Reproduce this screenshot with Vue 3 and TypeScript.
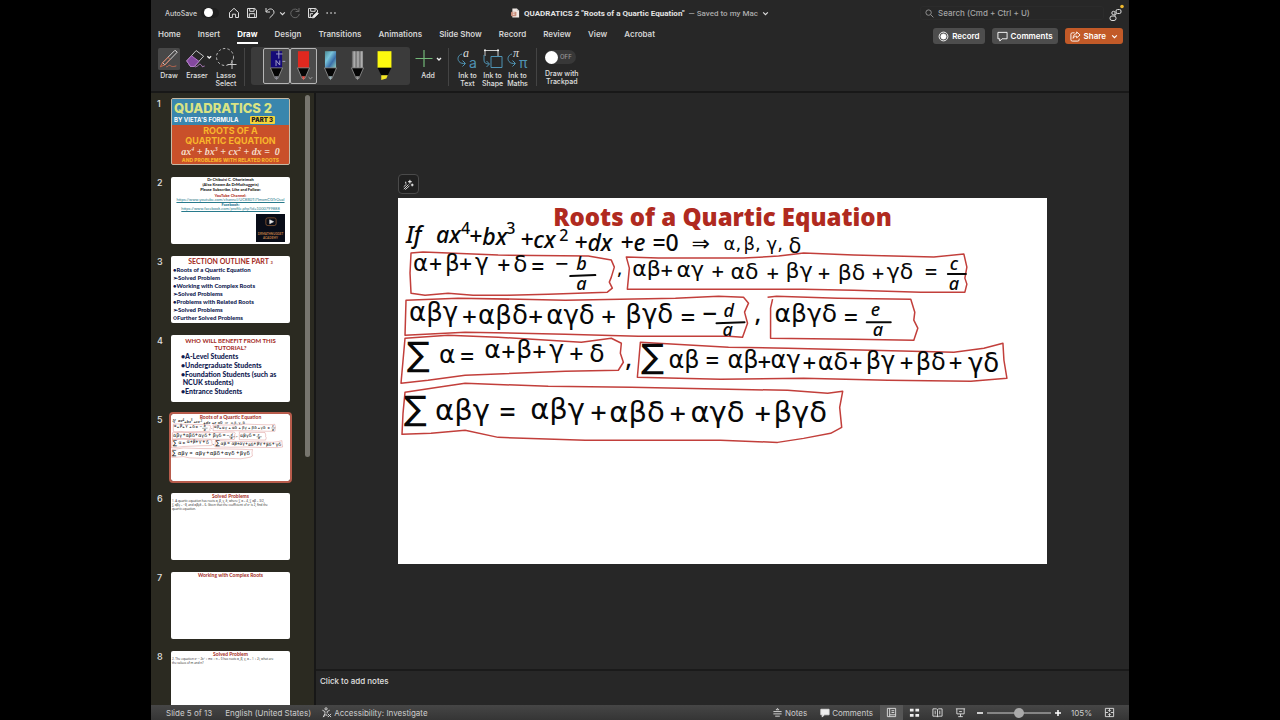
<script setup lang="ts">
import { ref } from 'vue'

interface Mark { t: string; x: number; y: number; s: number; kind: string }

const kindOf = (t: string): string =>
  /[α-ω]/.test(t) ? 'greek' : /[a-zA-Z]/.test(t) ? 'latin' : 'sign'

const m = (s: number, ...items: [string, number, number][]): Mark[] =>
  items.map(([t, x, y]) => ({ t, x, y, s, kind: kindOf(t) }))

const tabs = ['Home', 'Insert', 'Draw', 'Design', 'Transitions', 'Animations', 'Slide Show', 'Record', 'Review', 'View', 'Acrobat']
const activeTab = ref('Draw')
const autosave = ref(false)
const trackpad = ref(false)
const zoom = ref(50)
const search = ref('')
const pens = [
  { name: 'Blue pen', fill: '#150a78', tip: '#8c8c96', on: true },
  { name: 'Red pen', fill: '#e0281f', tip: '#e85a50', on: true },
  { name: 'Galaxy pen', fill: 'url(#galaxy)', tip: '#9fb7bd', on: false },
  { name: 'Pencil', fill: 'url(#pencil)', tip: '#9a9a9a', on: false },
]

const marks: Mark[] = [
  ...m(23, ['If', 8, 45], ['ax', 38, 45], ['+bx', 71, 47], ['+cx', 122, 50], ['+dx', 176, 53], ['+e', 222, 53]),
  ...m(23, ['=0', 254, 53]),
  ...m(22, ['⇒', 293, 53]),
  ...m(18, ['α,', 325, 52], ['β,', 345, 52], ['γ,', 368, 52]),
  ...m(21, ['δ', 390, 55]),
  ...m(16, ['4', 63, 36], ['3', 108, 36], ['2', 161, 43]),
  ...m(23, ['α', 15, 73], ['+', 31, 75], ['β', 47, 73], ['+', 61, 75], ['γ', 77, 72], ['+', 99, 76], ['δ', 115, 74], ['=', 133, 77], ['−', 157, 74]),
  ...m(18, ['b', 178, 72], ['a', 178, 92], [',', 219, 77]),
  ...m(22, ['αβ', 234, 78], ['+', 262, 80], ['αγ', 278, 79], ['+', 313, 81], ['αδ', 332, 81], ['+', 368, 83], ['βγ', 387, 80], ['+', 419, 83], ['βδ', 439, 82], ['+', 473, 83], ['γδ', 488, 81], ['=', 526, 82]),
  ...m(18, ['c', 551, 72], ['a', 550, 92]),
  ...m(26, ['αβγ', 11, 123], ['+', 64, 128], ['αβδ', 80, 126], ['+', 130, 128], ['αγδ', 148, 126], ['+', 203, 128], ['βγδ', 227, 125], ['=', 282, 128], ['−', 304, 125]),
  ...m(18, ['d', 325, 119], ['a', 324, 138], ['e', 472, 118], ['a', 474, 138]),
  ...m(25, [',', 356, 124], ['αβγδ', 376, 124], ['=', 445, 128]),
  ...m(34, ['∑', 9, 168], ['∑', 243, 170], ['∑', 6, 222]),
  ...m(25, ['α', 41, 165], ['=', 62, 167], ['α', 86, 160], ['+', 103, 163], ['β', 118, 160], ['+', 134, 163], ['γ', 151, 160], ['+', 171, 165], ['δ', 191, 164], [',', 227, 169]),
  ...m(24, ['αβ', 270, 170], ['=', 307, 171], ['αβ', 329, 170], ['+', 359, 173], ['αγ', 372, 170], ['+', 404, 174], ['αδ', 419, 172], ['+', 450, 174], ['βγ', 467, 171], ['+', 501, 174], ['βδ', 517, 172], ['+', 550, 174]),
  ...m(26, ['γδ', 569, 174]),
  ...m(29, ['αβγ', 37, 222], ['=', 101, 224], ['αβγ', 132, 221], ['+', 192, 225], ['αβδ', 211, 224], ['+', 271, 226], ['αγδ', 292, 224], ['+', 356, 226], ['βγδ', 375, 224]),
]

const fractionBars = 'M172 78 197 77 M549 76h18 M318 125 346 124 M468 124h24'

const boxes = [
  'M13 55 25 54 100 57 190 58 213 62 216 69 213 79 211 84 214 90 209 94 150 96 110 97 75 97 50 95 27 97 13 95 12 75Z',
  'M228 59 260 60 322 60 345 60 380 58 405 55 455 57 535 59 565 56 568 69 566 80 568 86 566 94 522 94 455 92 405 91 322 91 229 91 231 70Z',
  'M8 102 60 100 167 102 277 100 320 98 345 99 350 105 346 114 349 125 344 139 330 138 240 138 167 136 67 134 7 137Z',
  'M369 99 378 98 439 100 512 101 516 114 515 122 519 130 515 142 455 141 372 140 372 110 374 101',
  'M7 140 50 137 100 139 183 144 213 140 223 145 222 155 225 164 220 172 167 173 67 177 30 182 3 185Z',
  'M242 144 330 149 389 150 472 152 555 154 585 150 604 145 605 162 608 180 572 183 489 182 405 180 322 181 239 179Z',
  'M7 194 40 189 67 185 150 188 233 189 330 191 389 192 429 195 444 193 441 209 443 229 432 235 405 240 379 244 322 242 187 242 100 239 67 232 33 235 4 236 5 215Z',
]
</script>

<template>
  <div class="screen">
    <div class="app">
      <header class="titlebar">
        <div class="quick">
          <label class="autosave">AutoSave <input v-model="autosave" type="checkbox" /></label>
          <button aria-label="Home"><svg viewBox="0 0 12 12"><path d="M1.5 5.5 6 1.3l4.5 4.2v5H7.6V7.2H4.4v3.3H1.5z" /></svg></button>
          <button aria-label="Save"><svg viewBox="0 0 12 12"><path d="M1.5 1.5h7.3l1.7 1.7v7.3h-9zM3.7 1.7v2.6h4.4V1.7M3.3 10.3V6.7h5.4v3.6" /></svg></button>
          <button aria-label="Undo"><svg viewBox="0 0 12 12"><path d="M2 1v4h4M2.2 4.8C4 2 6.500 1.300 8.500 2.500 10.600 4 10.300 6.300 9 7.600L5.500 11" /></svg></button>
          <button class="tiny" aria-label="Undo options"><svg viewBox="0 0 6 6"><path d="m1 2 2 2 2-2" /></svg></button>
          <button class="dim" aria-label="Redo"><svg viewBox="0 0 12 12"><path d="M10 1v3.500H6.500M9.800 4.300A4.300 4.300 0 1 0 10.300 7" /></svg></button>
          <button aria-label="Save and edit"><svg viewBox="0 0 12 12"><path d="M5 10.500H1.500v-9h7.300l1.700 1.700V5M3.700 1.700v2.600h4.400V1.700M3.300 10.300V6.700H6" /><path d="m5.500 11 .6-2L10 5.200l1.400 1.400-3.900 3.800z" fill="#eee" /></svg></button>
          <button aria-label="More"><svg viewBox="0 0 12 12"><path d="M1.500 6h1.300M5.400 6h1.300M9.300 6h1.300" stroke-width="1.600" /></svg></button>
        </div>
        <div class="doc">
          <svg viewBox="0 0 10 11"><path d="M1.500.5h5L9 3v7.500H1.500z" fill="#f1e9e4" /><path d="M6.500.5V3H9" fill="#bbb" /><rect x="0" y="4" width="6" height="5" rx="1" fill="#c98f7c" /><path d="M2 5.300h2M2 7h2" stroke="#fff" stroke-width=".8" /></svg>
          <b>QUADRATICS 2 "Roots of a Quartic Equation"</b>
          <span>— Saved to my Mac</span>
          <svg class="chev" viewBox="0 0 6 6"><path d="m1 2 2 2 2-2" /></svg>
        </div>
        <div class="find">
          <label class="search">
            <svg viewBox="0 0 10 10"><circle cx="4" cy="4" r="3" /><path d="m6.300 6.300 3 3" /></svg>
            <input v-model="search" type="text" aria-label="Search" placeholder="Search (Cmd + Ctrl + U)" />
          </label>
          <button class="people" aria-label="Collaborators">
            <svg viewBox="0 0 16 18"><circle cx="5.500" cy="9" r="1.700" /><rect x="2" y="12" width="6" height="4.500" rx="2" /><rect x="8" y="5.500" width="5" height="4" rx="1.500" /><path d="m6.500 12 2-2.500" /><circle cx="14" cy="2.500" r="1.800" fill="#f0b92e" stroke="none" /></svg>
          </button>
        </div>
      </header>

      <nav class="tabs">
        <button v-for="t in tabs" :key="t" class="tab" :class="{ active: t === activeTab }" @click="activeTab = t">{{ t }}</button>
        <div class="actions">
          <button class="pill"><svg viewBox="0 0 12 12"><circle cx="6" cy="6" r="4.800" /><circle cx="6" cy="6" r="2.800" fill="#fff" /></svg>Record</button>
          <button class="pill"><svg viewBox="0 0 12 12"><path d="M1 1.500h10v7H5.500L3 11V8.500H1z" /></svg>Comments</button>
          <button class="pill share"><svg viewBox="0 0 12 12"><path d="M5 2H2.500A1.500 1.500 0 0 0 1 3.500v6A1.500 1.500 0 0 0 2.500 11h6A1.500 1.500 0 0 0 10 9.500V8.300M7.300 1l3.700 3.300-3.700 3.200V5.600C5.300 5.600 4.300 6.400 3.400 8c.1-3 1.400-4.900 3.900-5.100z" /></svg>Share<svg class="chev" viewBox="0 0 6 6"><path d="m1 2 2 2 2-2" /></svg></button>
        </div>
      </nav>

      <section class="ribbon">
        <button class="tool draw">
          <svg viewBox="0 0 24 24"><rect width="24" height="24" rx="2" fill="#484848" stroke="none" /><path d="M5 16 18.500 2.500l2.500 2L7.500 18.500z" stroke="#ddd" /><path d="M5 16 2.500 20.500l5-2 5.500-6L11 10z" stroke="#d36b4d" /><path d="M9 20.500c3 0 2-2.500 4-1.500s2 2 7 .5" stroke="#c66a50" /></svg>
          Draw
        </button>
        <button class="tool eraser">
          <svg viewBox="0 0 32 24"><path d="m4 14 10-11 8 6-10 11H8z" stroke="#ccc" /><path d="m4 14 5-5.500 8 6L12 20H8z" fill="#84489f" stroke="#b377ca" /><path d="M13 20.500c4-1 4-4 6-2.500s0 3 4 1.500" stroke="#c48ad5" /><path d="m26 9 2 2 2-2" stroke="#eee" stroke-width="1.400" /></svg>
          Eraser
        </button>
        <button class="tool lasso">
          <svg viewBox="0 0 24 24"><circle cx="11" cy="10" r="8.500" stroke="#bbb" stroke-dasharray="2.500 2.200" /><path d="M18 13v9M13.500 17.500h9" stroke="#ccc" /></svg>
          Lasso<br />Select
        </button>
        <span class="rule"></span>
        <div class="pens">
          <button v-for="p in pens" :key="p.name" class="pen" :class="{ on: p.on }" :aria-label="p.name">
            <svg viewBox="0 0 27 34">
              <defs>
                <linearGradient id="galaxy" x2="1" y2="1"><stop offset="0" stop-color="#4c8a93" /><stop offset=".35" stop-color="#79c4da" /><stop offset=".65" stop-color="#3a6ea8" /><stop offset="1" stop-color="#8fd0be" /></linearGradient>
                <linearGradient id="pencil" x2="4" spreadMethod="repeat" gradientUnits="userSpaceOnUse"><stop offset="0" stop-color="#6e6e6e" /><stop offset=".5" stop-color="#b5b5b5" /><stop offset="1" stop-color="#6e6e6e" /></linearGradient>
              </defs>
              <path d="M7.500 1h12v18h-12z" :fill="p.fill" />
              <path d="M7 19h13l-5 11.500h-3z" fill="#050505" stroke="#c9c9c9" stroke-width=".6" />
              <path d="m11.500 28 2 4.500 2-4.500z" :fill="p.tip" />
              <path v-if="p.name === 'Red pen'" d="m19 29 2 2 2-2" stroke="#aaa" fill="none" />
              <path v-if="p.name === 'Blue pen'" d="M16 0v9M13 4h7M13 17v-6l4 5v-5M20 12h3" stroke="#a6a4c9" fill="none" />
            </svg>
          </button>
          <button class="pen" aria-label="Yellow highlighter">
            <svg viewBox="0 0 27 34"><path d="M6 1h15v18H6z" fill="#fcf90f" /><path d="M6 19h15l-4 8h-7z" fill="#050505" /><path d="M10 27h7l-1.500 3.500L10 32z" fill="#f4e622" /></svg>
          </button>
        </div>
        <button class="tool add">
          <svg viewBox="0 0 28 24"><path d="M10 3v17M1.500 11.500h17" stroke="#72b878" stroke-width="1.200" /><path d="m23 11 2 2 2-2" stroke="#eee" stroke-width="1.400" /></svg>
          Add
        </button>
        <span class="rule"></span>
        <div class="inks">
          <button class="tool ink">
            <svg viewBox="0 0 24 24"><text x="7" y="10" class="ia">a</text><text x="13" y="21" class="ib">a</text><path d="M6 7C2 8 1 12 3 14.500c1.500 2 4 2 6 2M6.500 13.500l3 3-3 3" stroke="#4f93b4" /></svg>
            Ink to<br />Text
          </button>
          <button class="tool ink">
            <svg viewBox="0 0 24 24"><path d="M4 3.500h13M17 5v4M4 5v4" stroke="#ccc" /><path d="M3 2.500h2v2H3zM16 2.500h2v2h-2z" fill="#eee" stroke="none" /><path d="M10 9.500h11v11H10zM3 8v5c0 3 2 4 5 4M5.500 14l3 3-3 3" stroke="#4f93b4" /></svg>
            Ink to<br />Shape
          </button>
          <button class="tool ink">
            <svg viewBox="0 0 24 24"><text x="7" y="10" class="ia">π</text><text x="13" y="21" class="ib">π</text><path d="M6 7C2 8 1 12 3 14.500c1.500 2 4 2 6 2M6.500 13.500l3 3-3 3" stroke="#4f93b4" /></svg>
            Ink to<br />Maths
          </button>
        </div>
        <span class="rule"></span>
        <label class="trackpad">
          <span class="switch"><input v-model="trackpad" type="checkbox" /><i>OFF</i></span>
          Draw with<br />Trackpad
        </label>
      </section>

      <main class="body">
        <aside class="rail">
          <ol class="thumbs">
            <li><span>1</span>
              <div class="thumb cover">
                <div class="top"><b>QUADRATICS 2</b><div><em>BY VIETA'S FORMULA</em><mark>PART 3</mark></div></div>
                <div class="mid"><b>ROOTS OF A<br />QUARTIC EQUATION</b><i>ax<sup>4</sup> + bx<sup>3</sup> + cx<sup>2</sup> + dx = &nbsp;0</i><small>AND PROBLEMS WITH RELATED ROOTS</small></div>
              </div>
            </li>
            <li><span>2</span>
              <div class="thumb author">
                <p>Dr Chibuisi C. Okorieimoh</p><p>(Also Known As DrMathuggets)</p><p>Please Subscribe, Like and Follow:</p>
                <p class="red">YouTube Channel:</p><a href="#">https://www.youtube.com/channel/UC8B0Ti7ImxmCGTrOual</a>
                <p class="blue">Facebook:</p><a href="#">https://www.facebook.com/profile.php?id=1000799888</a>
                <div class="logo"><svg viewBox="0 0 28 28"><rect x="6" y="6" width="16" height="12" rx="3" fill="none" stroke="#a86b3a" /><path d="m12 9 6 3-6 3z" fill="#eee" /></svg><span>DRMATHNUGGET</span><span>ACADEMY</span></div>
              </div>
            </li>
            <li><span>3</span>
              <div class="thumb outline">
                <h3>SECTION OUTLINE PART <small>3</small></h3>
                <p>•Roots of a Quartic Equation</p><p>➢Solved Problem</p><p>•Working with Complex Roots</p><p>➢Solved Problems</p><p>•Problems with Related Roots</p><p>➢Solved Problems</p><p>○Further Solved Problems</p>
              </div>
            </li>
            <li><span>4</span>
              <div class="thumb benefit">
                <h3>WHO WILL BENEFIT FROM THIS<br />TUTORIAL?</h3>
                <p>•A-Level Students</p><p>•Undergraduate Students</p><p>•Foundation Students (such as<br />&nbsp;NCUK students)</p><p>•Entrance Students</p>
              </div>
            </li>
            <li><span>5</span>
              <div class="thumb current"><h4>Roots of a Quartic Equation</h4><svg class="mini" viewBox="0 0 648 365"><use href="#ink" /></svg></div>
            </li>
            <li><span>6</span>
              <div class="thumb problem"><h4>Solved Problems</h4><p>1. A quartic equation has roots α, β, γ, δ, where ∑ α = 4, ∑ αβ = 3/2,<br />∑ αβγ = −8, and αβγδ = 6. Given that the coefficient of x⁴ is 2, find the<br />quartic equation.</p></div>
            </li>
            <li><span>7</span><div class="thumb problem"><h4>Working with Complex Roots</h4></div></li>
            <li><span>8</span>
              <div class="thumb problem"><h4>Solved Problem</h4><p>2. The equation x⁴ − 2x³ + mx + n = 0 has roots α, β, γ, α = 1 + 2i, what are<br />the values of m and n?</p></div>
            </li>
          </ol>
          <div class="scroll"></div>
        </aside>

        <div class="work">
          <div class="stage">
            <button class="designer" aria-label="Designer">
              <svg viewBox="0 0 14 14"><path d="m2 12 5-5M3.500 12.500l4.500-4M1.800 9.500 5 6.500" stroke="#ddd" /><path d="M8.500 2v4M6.500 4h4M11 6v3M9.500 7.500h3M4 4v2" stroke="#fff" /></svg>
            </button>
            <article class="slide">
              <h1>Roots of a Quartic Equation</h1>
              <svg class="ink-layer" viewBox="0 0 648 365">
                <g id="ink">
                  <path v-for="(b, i) in boxes" :key="'b' + i" :d="b" class="box" />
                  <text v-for="(k, i) in marks" :key="i" :x="k.x" :y="k.y" :font-size="k.s" class="hand" :class="k.kind">{{ k.t }}</text>
                  <path :d="fractionBars" class="bar" />
                </g>
              </svg>
            </article>
          </div>
          <div class="notes">Click to add notes</div>
        </div>
      </main>

      <footer class="status">
        <span>Slide 5 of 13</span>
        <span>English (United States)</span>
        <button class="acc"><svg viewBox="0 0 12 12"><circle cx="5.500" cy="2" r="1.200" /><path d="M1.500 3.500 4.300 5v2L2.500 11 5.500 8l1.500 2M9.500 3.500 6.700 5v2M7.500 7.500l3.500 3.500M11 7.500 7.500 11" /></svg>Accessibility: Investigate</button>
        <div class="right">
          <button class="word"><svg viewBox="0 0 12 12"><path d="M1.500 5h9M1.500 7.500h9M3.500 10h5M4.500 3 6 1.500 7.500 3z" /></svg>Notes</button>
          <button class="word"><svg viewBox="0 0 12 12"><path d="M2 2.500h9v6H6L3.500 11V8.500H2z" fill="#eee" /></svg>Comments</button>
          <div class="views">
            <button class="on" aria-label="Normal"><svg viewBox="0 0 12 12"><path d="M1.500 1.500h9v9h-9zM4 1.500v9M6 4h3M6 6h3M4 8.500h6.500" /></svg></button>
            <button aria-label="Slide sorter"><svg viewBox="0 0 12 12"><path d="M1 2h4v3H1zM7 2h4v3H7zM1 7.500h4v3H1zM7 7.500h4v3H7z" fill="#eee" stroke="none" /></svg></button>
            <button aria-label="Reading view"><svg viewBox="0 0 12 12"><path d="M1 2h4l1 1 1-1h4v8H7l-1 1-1-1H1zM6 3v8M3.500 4v4M8.500 4v4" /></svg></button>
            <button aria-label="Slide show"><svg viewBox="0 0 12 12"><path d="M1 2h10M2 2v5.500h8V2M6 7.500v3M3.500 10.500h5M4.500 5h3" /></svg></button>
          </div>
          <button class="step" aria-label="Zoom out"><svg viewBox="0 0 8 8"><path d="M1 4h6" stroke-width="1.500" /></svg></button>
          <input v-model.number="zoom" class="zoom" type="range" min="0" max="100" aria-label="Zoom" />
          <button class="step" aria-label="Zoom in"><svg viewBox="0 0 8 8"><path d="M1 4h6M4 1v6" stroke-width="1.500" /></svg></button>
          <span class="pct">105%</span>
          <button class="fit" aria-label="Fit slide"><svg viewBox="0 0 12 12"><path d="M1.500 1.500h9v9h-9zM6 1.500v3M6 7.500v3M1.500 6h3M7.500 6h3M4.500 3.500 6 5l1.500-1.500M4.500 8.500 6 7l1.500 1.500" /></svg></button>
        </div>
      </footer>
    </div>
  </div>
</template>

<style>
html, body { background: #000; }
</style>

<style scoped>
* { box-sizing: border-box; }
.screen { display: grid; grid-template-columns: 151fr 978fr 151fr; height: 100vh; background: #000; font-family: Inter, "Liberation Sans", sans-serif; color: #e0e0e0; overflow: hidden; }
.app { grid-column: 2; display: flex; flex-direction: column; min-width: 0; min-height: 0; background: #272727; }
button { font: inherit; color: inherit; background: none; border: 0; padding: 0; }
svg { display: block; fill: none; stroke: #ddd; stroke-width: 1; flex: none; }
.chev { width: 7px; height: 7px; }

.titlebar { display: grid; grid-template-columns: 1fr auto 1fr; align-items: center; height: 26px; font-size: 8px; }
.quick { display: flex; align-items: center; padding-left: 14px; gap: 6px; }
.quick svg { width: 12px; height: 12px; }
.quick .tiny { margin: 0 -3px; }
.quick .tiny svg { width: 7px; height: 7px; }
.quick .dim { opacity: .35; }
.autosave { display: flex; align-items: center; gap: 4px; margin-right: 3px; color: #ccc; font-size: 7px; font-weight: 500; }
.autosave input { appearance: none; width: 18px; height: 10px; margin: 0; border-radius: 5px; background: #1f1f1f; }
.autosave input::before { content: ""; display: block; width: 9px; height: 9px; border-radius: 50%; background: #fff; margin-left: 3px; }
.doc { display: flex; align-items: center; gap: 4px; white-space: nowrap; color: #aaa; font-family: Roboto, Inter, sans-serif; }
.doc b { font-weight: 700; color: #e4e4e4; }
.doc span { font-weight: 500; }
.doc svg:first-child { width: 9px; height: 10px; stroke: none; }
.find { display: flex; justify-content: flex-end; align-items: center; gap: 4px; padding-right: 5px; }
.search { display: flex; align-items: center; gap: 4px; width: 184px; height: 14px; padding-left: 4px; border: 1px solid #2b2b2b; border-radius: 3px; }
.search svg { width: 9px; height: 9px; stroke: #999; }
.search input { flex: 1; min-width: 0; border: 0; padding: 0; background: none; outline: 0; font: 500 8px Inter, sans-serif; color: #ddd; }
.search input::placeholder { color: #a5a5a5; opacity: 1; }
.people svg { width: 16px; height: 18px; }

.tabs { display: flex; align-items: center; height: 18px; padding-left: 7px; font-size: 8px; font-weight: 600; gap: 17px; color: #d4d4d4; }
.tab { height: 18px; white-space: nowrap; border-bottom: 2px solid transparent; }
.tab.active { font-weight: 700; color: #fff; border-color: #fff; }
.actions { display: flex; gap: 7px; margin-left: auto; padding: 2px 6px 0 0; }
.pill { display: flex; align-items: center; justify-content: center; gap: 3px; height: 16px; padding: 0 5px; border-radius: 3px; background: #4d4d4d; color: #fff; font-size: 8px; font-weight: 600; }
.pill svg { width: 11px; height: 11px; stroke: #fff; }
.pill.share { background: #c25a28; }
.pill .chev { width: 7px; height: 7px; margin-left: 2px; }

.ribbon { display: flex; align-items: flex-start; gap: 3px; height: 49px; padding: 3px 0 0 7px; border-bottom: 2px solid #181818; font-size: 7px; font-weight: 500; line-height: 8px; }
.tool { display: block; text-align: center; white-space: nowrap; }
.tool svg { height: 24px; margin: 0 auto 1px; overflow: visible; }
.draw { width: 22px; }
.draw svg { width: 22px; }
.eraser { width: 28px; }
.eraser svg { width: 30px; }
.lasso { width: 24px; }
.lasso svg { width: 24px; }
.add { width: 28px; margin-left: 1px; }
.add svg { width: 28px; }
.inks { display: flex; }
.ink { width: 25px; }
.ink svg { width: 24px; }
.ia { font: italic 12px "Liberation Serif", serif; fill: #ddd; stroke: none; }
.ib { font: 14px Inter, "Noto Sans", sans-serif; fill: #4f93b4; stroke: none; }
.rule { width: 1px; height: 38px; margin: 1px 3px 0; background: #444; }
.pens { display: flex; align-items: center; width: 159px; height: 38px; padding-left: 12px; background: #3b3b3b; border-radius: 3px; }
.pen { width: 27px; height: 36px; border: 1px solid transparent; border-radius: 2px; }
.pen.on { border-color: #b5b5b5; background: #4b4b4b; }
.pen svg { width: 25px; height: 34px; stroke: none; }
.trackpad { text-align: center; padding-top: 3px; margin-left: 2px; }
.switch { display: flex; align-items: center; width: 31px; height: 14px; margin-bottom: 6px; border-radius: 7px; background: #383838; }
.switch input { appearance: none; width: 13px; height: 13px; margin: 0 2px 0 0; border-radius: 50%; background: #fff; }
.switch i { font-style: normal; font-size: 6px; color: #999; }

.body { flex: 1; display: flex; min-height: 0; }
.rail { position: relative; width: 165px; flex: none; overflow: hidden; background: #2b2a21; border-right: 2px solid #171717; }
.thumbs { list-style: none; margin: 0; padding: 5px 0 0 6px; display: flex; flex-direction: column; gap: 12px; }
.thumbs li { display: flex; gap: 2px; }
.thumbs li > span { width: 12px; flex: none; font-size: 9px; line-height: 12px; font-weight: 500; }
.thumb { width: 119px; height: 67px; flex: none; border-radius: 2px; background: #fff; color: #111b52; overflow: hidden; font-family: Lato, sans-serif; font-weight: 900; }
.thumb p, .thumb h3, .thumb h4 { margin: 0; white-space: nowrap; }
.scroll { position: absolute; right: 4px; top: 2px; width: 5px; height: 362px; border-radius: 3px; background: #77756e; }

.cover { border: 1px solid #c5b9a5; background: #c9502a; text-align: center; font-family: Inter, sans-serif; }
.cover .top { height: 26px; padding: 1px 2px; background: #3a86ad; text-align: left; }
.cover .top b { display: block; font-size: 13px; line-height: 16px; font-weight: 800; color: #d9e384; white-space: nowrap; }
.cover .top div { display: flex; justify-content: space-between; align-items: center; line-height: 8px; padding-right: 12px; }
.cover em { font-style: normal; font-size: 6px; font-weight: 700; color: #fff; white-space: nowrap; }
.cover mark { padding: 0 2px; border-radius: 1px; background: #f4d53c; color: #222; font-size: 6px; white-space: nowrap; }
.cover .mid { color: #f8b52c; padding-top: 1px; }
.cover .mid b { display: block; font-size: 9px; line-height: 10px; font-weight: 700; white-space: nowrap; }
.cover .mid i { display: block; font: italic 700 10px/11px "Liberation Serif", serif; color: #f6dcc9; white-space: nowrap; }
.cover sup { font-size: 6px; line-height: 0; }
.cover small { display: block; font-size: 5px; line-height: 6px; font-weight: 800; white-space: nowrap; }

.author { position: relative; text-align: center; font-size: 4px; line-height: 5px; color: #222; }
.author a { display: block; font-size: 4px; line-height: 4px; font-weight: 400; color: #287a8c; white-space: nowrap; }
.author .red { color: #b03028; padding-top: 1px; }
.author .blue { color: #2a7590; }
.logo { position: absolute; right: 5px; bottom: 2px; width: 29px; height: 28px; background: #090d18; color: #b97743; font-size: 3px; line-height: 4px; }
.logo svg { width: 28px; height: 18px; margin: 0 auto; }
.logo span { display: block; }
.outline { padding: 2px; font-size: 6px; line-height: 8px; }
.outline h3 { text-align: center; color: #a32a22; font-size: 7px; line-height: 7px; }
.outline h3 small { font-size: 4px; }
.benefit { padding: 2px 0 0 10px; font-size: 7px; line-height: 8px; }
.benefit p { margin-bottom: 1px; }
.benefit h3 { margin: 0 10px 1px 0; text-align: center; color: #a32a22; font-size: 6px; line-height: 7px; }
.current { position: relative; outline: 2px solid #b85c4c; }
.thumb h4 { text-align: center; color: #a32a22; font-size: 5px; line-height: 6px; }
.mini { position: absolute; inset: 0; width: 100%; height: 100%; }
.problem p { padding: 0 1px; font: 400 3px/4px "Open Sans", sans-serif; color: #222; }

.work { flex: 1; min-width: 0; display: flex; flex-direction: column; }
.stage { flex: 1; display: flex; flex-direction: column; justify-content: center; gap: 4px; padding: 0 82px 24px; }
.designer { display: flex; align-items: center; justify-content: center; width: 21px; height: 20px; border: 1px solid #4a4a4a; border-radius: 4px; background: #202020; }
.designer svg { width: 13px; height: 13px; }
.slide { position: relative; aspect-ratio: 648 / 365; background: #fff; }
h1 { margin: 0; padding-top: 4px; text-align: center; color: #b02a20; font: 800 24px/30px "Open Sans", Lato, sans-serif; white-space: nowrap; }
.ink-layer { position: absolute; inset: 0; width: 100%; height: 100%; }
.hand { font-family: "Noto Sans", "DejaVu Sans", sans-serif; font-weight: 500; fill: #080808; stroke: none; }
.hand.latin { font-style: italic; }
.hand.greek { font-family: "DejaVu Sans", sans-serif; font-weight: 400; }
.box { stroke: #c23f3b; stroke-width: 1.500; stroke-linejoin: round; fill: none; }
.bar { stroke: #080808; stroke-width: 2; stroke-linecap: round; }
.notes { height: 36px; padding: 5px 4px; border-top: 2px solid #1a1a1a; font-size: 8px; font-weight: 500; line-height: 11px; }

.status { display: flex; align-items: center; gap: 13px; height: 15px; flex: none; padding-left: 15px; background: linear-gradient(#464646, #353535); color: #ccc; font-size: 8px; white-space: nowrap; }
.status svg { width: 11px; height: 11px; }
.status button { display: flex; align-items: center; justify-content: center; }
.acc { gap: 2px; }
.status .acc { margin-left: -3px; }
.right { display: flex; align-items: center; margin-left: auto; padding-right: 14px; }
.word { gap: 2px; }
.right .word { margin-right: 12px; }
.right .word + .word { margin-right: 7px; }
.views { display: flex; margin-right: 4px; }
.views button { width: 23px; height: 15px; }
.views .on { background: #565656; }
.status .step svg { width: 8px; height: 8px; stroke: #fff; }
.zoom { appearance: none; width: 64px; height: 10px; margin: 0 3px; background: linear-gradient(#858585, #858585) center / 100% 2px no-repeat; }
.zoom::-webkit-slider-thumb { appearance: none; width: 10px; height: 10px; border-radius: 50%; background: #aaa; }
.pct { margin: 0 12px 0 9px; }
</style>
